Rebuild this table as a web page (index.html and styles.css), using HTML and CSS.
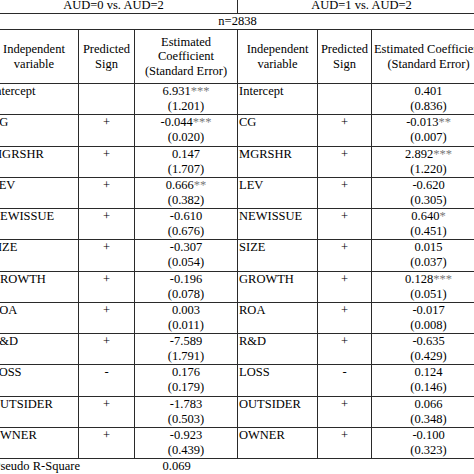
FILE: index.html
```html
<!DOCTYPE html>
<html>
<head>
<meta charset="utf-8">
<link rel="stylesheet" href="styles.css">
</head>
<body>
<table class="tbl">
  <colgroup>
    <col class="c1"><col class="c2"><col class="c3"><col class="c4"><col class="c5"><col class="c6">
  </colgroup>
  <tr class="grp-row">
    <td class="grp" colspan="3">AUD=0 vs. AUD=2</td>
    <td class="grp" colspan="3">AUD=1 vs. AUD=2</td>
  </tr>
  <tr class="n-row">
    <td class="n" colspan="6">n=2838</td>
  </tr>
  <tr class="hd-row">
    <td class="hd">Independent<br>variable</td>
    <td class="hd">Predicted<br>Sign</td>
    <td class="hd">Estimated<br>Coefficient<br>(Standard Error)</td>
    <td class="hd">Independent<br>variable</td>
    <td class="hd">Predicted<br>Sign</td>
    <td class="hd nowrap">Estimated Coefficient<br>(Standard Error)</td>
  </tr>
  <tr class="row">
    <td class="var">Intercept</td><td class="sign"></td><td class="val">6.931<span class="st">***</span><br>(1.201)</td>
    <td class="var">Intercept</td><td class="sign"></td><td class="val">0.401<br>(0.836)</td>
  </tr>
  <tr class="row">
    <td class="var">CG</td><td class="sign">+</td><td class="val">-0.044<span class="st">***</span><br>(0.020)</td>
    <td class="var">CG</td><td class="sign">+</td><td class="val">-0.013<span class="st">**</span><br>(0.007)</td>
  </tr>
  <tr class="row">
    <td class="var">MGRSHR</td><td class="sign">+</td><td class="val">0.147<br>(1.707)</td>
    <td class="var">MGRSHR</td><td class="sign">+</td><td class="val">2.892<span class="st">***</span><br>(1.220)</td>
  </tr>
  <tr class="row">
    <td class="var">LEV</td><td class="sign">+</td><td class="val">0.666<span class="st">**</span><br>(0.382)</td>
    <td class="var">LEV</td><td class="sign">+</td><td class="val">-0.620<br>(0.305)</td>
  </tr>
  <tr class="row">
    <td class="var">NEWISSUE</td><td class="sign">+</td><td class="val">-0.610<br>(0.676)</td>
    <td class="var">NEWISSUE</td><td class="sign">+</td><td class="val">0.640<span class="st">*</span><br>(0.451)</td>
  </tr>
  <tr class="row">
    <td class="var">SIZE</td><td class="sign">+</td><td class="val">-0.307<br>(0.054)</td>
    <td class="var">SIZE</td><td class="sign">+</td><td class="val">0.015<br>(0.037)</td>
  </tr>
  <tr class="row">
    <td class="var">GROWTH</td><td class="sign">+</td><td class="val">-0.196<br>(0.078)</td>
    <td class="var">GROWTH</td><td class="sign">+</td><td class="val">0.128<span class="st">***</span><br>(0.051)</td>
  </tr>
  <tr class="row">
    <td class="var">ROA</td><td class="sign">+</td><td class="val">0.003<br>(0.011)</td>
    <td class="var">ROA</td><td class="sign">+</td><td class="val">-0.017<br>(0.008)</td>
  </tr>
  <tr class="row">
    <td class="var">R&amp;D</td><td class="sign">+</td><td class="val">-7.589<br>(1.791)</td>
    <td class="var">R&amp;D</td><td class="sign">+</td><td class="val">-0.635<br>(0.429)</td>
  </tr>
  <tr class="row">
    <td class="var">LOSS</td><td class="sign">-</td><td class="val">0.176<br>(0.179)</td>
    <td class="var">LOSS</td><td class="sign">-</td><td class="val">0.124<br>(0.146)</td>
  </tr>
  <tr class="row">
    <td class="var">OUTSIDER</td><td class="sign">+</td><td class="val">-1.783<br>(0.503)</td>
    <td class="var">OUTSIDER</td><td class="sign">+</td><td class="val">0.066<br>(0.348)</td>
  </tr>
  <tr class="row">
    <td class="var">OWNER</td><td class="sign">+</td><td class="val">-0.923<br>(0.439)</td>
    <td class="var">OWNER</td><td class="sign">+</td><td class="val">-0.100<br>(0.323)</td>
  </tr>
  <tr class="foot">
    <td class="var pseudo">Pseudo R-Square</td><td></td><td class="fval">0.069</td>
    <td></td><td></td><td></td>
  </tr>
</table>
</body>
</html>
```

FILE: styles.css
```css
html, body {
  margin: 0;
  padding: 0;
  overflow: hidden;
  background: #ffffff;
}

.tbl {
  border-collapse: collapse;
  table-layout: fixed;
  width: 496px;
  margin: -3px 0 0 -11px;
  font-family: "Liberation Serif", "Times New Roman", serif;
  font-size: 12.5px;
  color: #000000;
}

.c1 { width: 89px; }
.c2 { width: 56px; }
.c3 { width: 103px; }
.c4 { width: 80px; }
.c5 { width: 54px; }
.c6 { width: 114px; }

.tbl td {
  border: 1px solid #2a2a2a;
  padding: 0 1px;
  vertical-align: top;
  line-height: 15px;
}

.grp {
  text-align: center;
  border-top: none;
  padding-bottom: 3px;
}

.n {
  text-align: center;
  line-height: 14px;
}

.hd {
  text-align: center;
  vertical-align: middle !important;
  line-height: 14.5px !important;
  height: 53px;
}

.nowrap {
  white-space: nowrap;
}

.row td {
  padding-bottom: 0.25px;
}

.var {
  text-align: left;
  white-space: nowrap;
}

.sign {
  text-align: center;
}

.val {
  text-align: center;
}

.st {
  color: #777777;
}

.foot td {
  border: none;
}

.pseudo {
  padding-left: 4px !important;
}

.fval {
  text-align: left;
  padding-left: 28px !important;
}
```
